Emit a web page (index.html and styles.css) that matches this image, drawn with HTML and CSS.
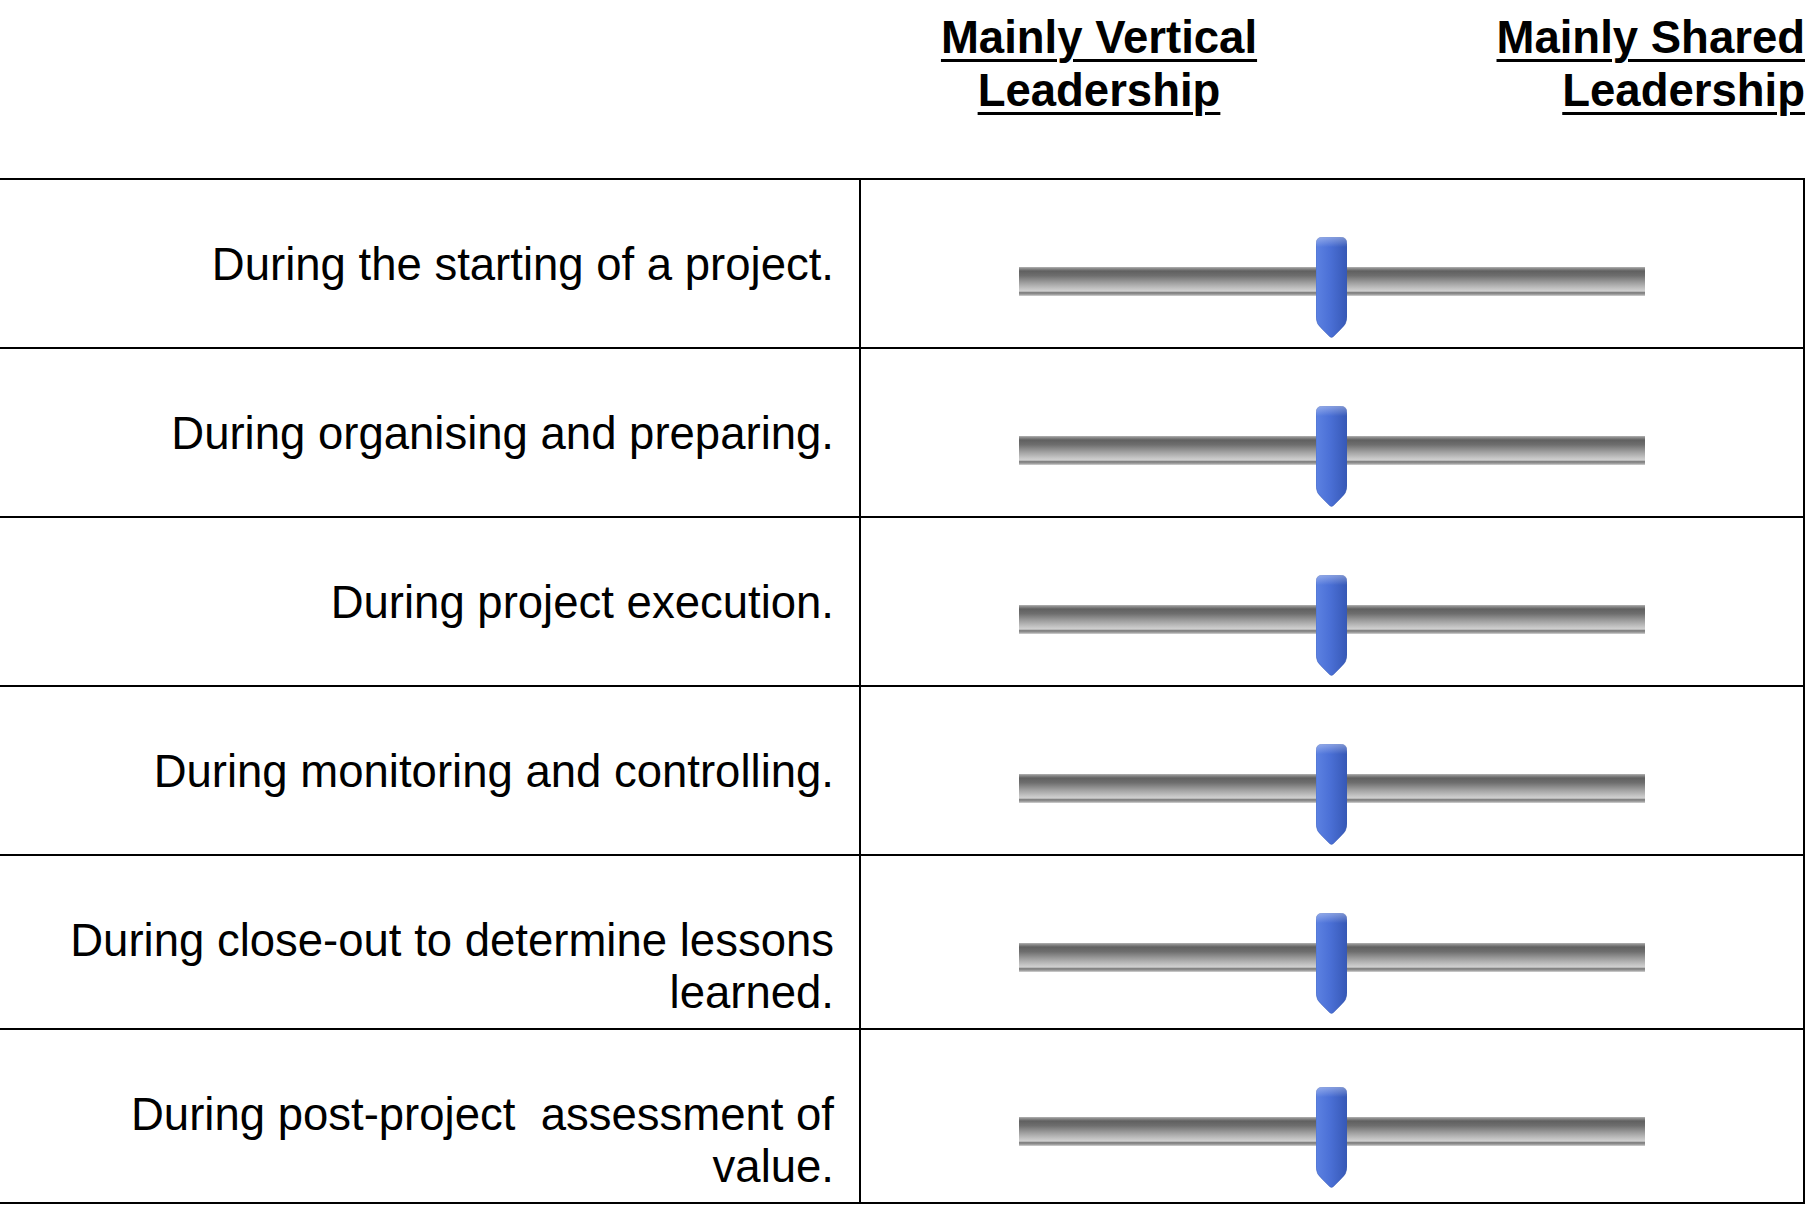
FILE: index.html
```html
<!DOCTYPE html>
<html lang="en">
<head>
  <meta charset="UTF-8">
  <title>Leadership Scale</title>
  <link rel="stylesheet" href="styles.css">
</head>
<body>
  <!-- shared shapes for the slider thumbs -->
  <svg class="defs" aria-hidden="true">
    <defs>
      <linearGradient id="thumb-fill" x1="0" x2="1" y1="0" y2="0">
        <stop offset="0" stop-color="#5d82e2"/>
        <stop offset="0.45" stop-color="#4b70d6"/>
        <stop offset="1" stop-color="#3658b6"/>
      </linearGradient>
      <linearGradient id="thumb-shine" x1="0" x2="0" y1="0" y2="1">
        <stop offset="0" stop-color="#ffffff" stop-opacity="0.35"/>
        <stop offset="0.1" stop-color="#ffffff" stop-opacity="0"/>
      </linearGradient>
      <symbol id="thumb" viewBox="0 0 31 101">
        <path d="M0,7 Q0,0 7,0 H24 Q31,0 31,7 V80 Q31,87 25,92 L17.5,99.5 Q15.5,101.5 13.5,99.5 L6,92 Q0,87 0,80 Z" fill="url(#thumb-fill)" stroke="#3a5ab0" stroke-opacity="0.5" stroke-width="0.8"/>
        <path d="M0,7 Q0,0 7,0 H24 Q31,0 31,7 V80 Q31,87 25,92 L17.5,99.5 Q15.5,101.5 13.5,99.5 L6,92 Q0,87 0,80 Z" fill="url(#thumb-shine)"/>
      </symbol>
    </defs>
  </svg>

  <header class="scale-head">
    <div></div>
    <h2 class="pole pole-left">Mainly Vertical<br>Leadership</h2>
    <h2 class="pole pole-right">Mainly Shared<br>Leadership</h2>
  </header>

  <main class="rating-table">
    <div class="row">
      <div class="label">During the starting of a project.</div>
      <div class="scale">
        <div class="slider"><div class="track"></div><svg class="thumb"><use href="#thumb"/></svg></div>
      </div>
    </div>
    <div class="row">
      <div class="label">During organising and preparing.</div>
      <div class="scale">
        <div class="slider"><div class="track"></div><svg class="thumb"><use href="#thumb"/></svg></div>
      </div>
    </div>
    <div class="row">
      <div class="label">During project execution.</div>
      <div class="scale">
        <div class="slider"><div class="track"></div><svg class="thumb"><use href="#thumb"/></svg></div>
      </div>
    </div>
    <div class="row">
      <div class="label">During monitoring and controlling.</div>
      <div class="scale">
        <div class="slider"><div class="track"></div><svg class="thumb"><use href="#thumb"/></svg></div>
      </div>
    </div>
    <div class="row row-tall">
      <div class="label">During close-out to determine lessons learned.</div>
      <div class="scale">
        <div class="slider"><div class="track"></div><svg class="thumb"><use href="#thumb"/></svg></div>
      </div>
    </div>
    <div class="row row-tall">
      <div class="label">During post-project &nbsp;assessment of value.</div>
      <div class="scale">
        <div class="slider"><div class="track"></div><svg class="thumb"><use href="#thumb"/></svg></div>
      </div>
    </div>
  </main>
</body>
</html>
```

FILE: styles.css
```css
/* General */
* {
  margin: 0;
  padding: 0;
  box-sizing: border-box;
}

body {
  font-family: 'Liberation Sans', Arial, sans-serif;
  background: #fff;
  color: #000;
  width: 1810px;
}

.defs {
  position: absolute;
  width: 0;
  height: 0;
  overflow: hidden;
}

/* Column headings */
.scale-head {
  display: grid;
  grid-template-columns: 861px 476px 468px;
  padding-top: 11px;
}

.pole {
  font-size: 45.5px;
  line-height: 53px;
  font-weight: bold;
  text-decoration: underline;
  text-decoration-thickness: 3px;
  text-underline-offset: 6px;
}

.pole-left {
  text-align: center;
}

.pole-right {
  text-align: right;
}

/* Table */
.rating-table {
  width: 1805px;
  margin-top: 61px;
  border-top: 2px solid #000;
}

.row {
  display: grid;
  grid-template-columns: 861px 944px;
  height: 169px;
  border-bottom: 2px solid #000;
}

.row-tall {
  height: 174px;
}

.label {
  font-size: 45.5px;
  line-height: 52px;
  text-align: right;
  padding: 59px 25px 0 20px;
  border-right: 2px solid #000;
}

.scale {
  display: flex;
  justify-content: center;
  align-items: flex-start;
  padding-top: 57px;
  border-right: 2px solid #000;
}

/* Slider */
.slider {
  position: relative;
  width: 626px;
  height: 101px;
  padding-top: 30px;
}

.track {
  height: 29px;
  background: linear-gradient(to bottom,
    #b4b4b4 0%, #8e8e8e 5%, #606060 14%, #6e6e6e 30%,
    #a0a0a0 55%, #c6c6c6 76%, #d0d0d0 83%, #828282 88%,
    #8e8e8e 93%, #d4d4d4 100%);
}

.thumb {
  position: absolute;
  top: 0;
  left: 297px;
  width: 31px;
  height: 101px;
}
```
